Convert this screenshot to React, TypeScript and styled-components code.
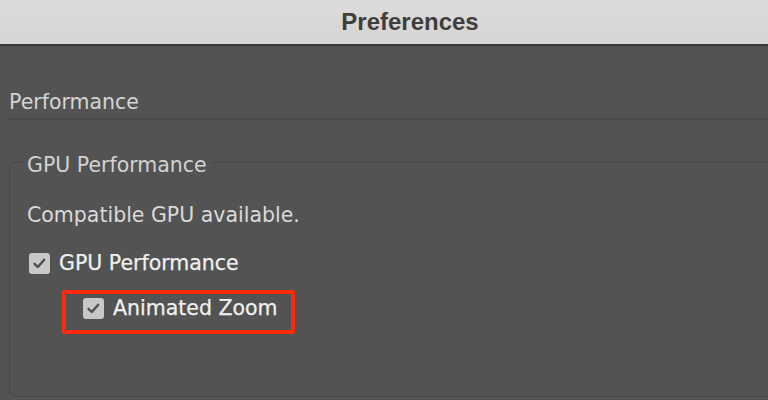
import styled, { createGlobalStyle } from "styled-components"

const GlobalStyle = createGlobalStyle`
  html, body {
    margin: 0;
    padding: 0;
    background: #535353;
  }
  #root {
    width: 768px;
    height: 400px;
    overflow: hidden;
  }
`

const Window = styled.div`
  width: 768px;
  height: 400px;
  display: flex;
  flex-direction: column;
  background: #535353;
  font-family: "DejaVu Sans", "Liberation Sans", sans-serif;
  overflow: hidden;
`

const TitleBar = styled.div`
  height: 44px;
  flex-shrink: 0;
  display: flex;
  align-items: center;
  justify-content: center;
  padding-left: 52px;
  background: linear-gradient(#dcdbd9, #d6d5d3);
  border-bottom: 2px solid #3a3a3a;
`

const Title = styled.h1`
  margin: 0;
  font-family: "Liberation Sans", Arial, sans-serif;
  font-size: 24px;
  font-weight: 700;
  color: #3e3e3e;
`

const Body = styled.div`
  padding: 44px 0 0 9px;
  margin-right: -30px;
`

const SectionHeading = styled.div`
  font-size: 20.5px;
  line-height: 24px;
  color: #d4d4d4;
  padding-bottom: 4px;
  border-bottom: 2px solid #484848;
`

const Group = styled.fieldset`
  margin: 28px 0 0 0;
  padding: 0 0 62px 17px;
  border: 1px solid #474747;
  border-radius: 5px;
  box-shadow: 0 1px 0 #5a5a5a;
`

const GroupTitle = styled.legend`
  padding: 5px 5px 0;
  margin-left: -5px;
  font-size: 20.5px;
  line-height: 24px;
  color: #d2d2d2;
`

const Note = styled.div`
  margin-top: 26px;
  font-size: 20.5px;
  line-height: 24px;
  color: #dadada;
`

const CheckRow = styled.label<{ $indent?: number }>`
  display: flex;
  align-items: center;
  gap: 9px;
  height: 24px;
  margin-left: ${(p) => p.$indent ?? 2}px;
  font-size: 20.5px;
  color: #f0f0f0;
  -webkit-text-stroke: 0.25px #f0f0f0;
`

const FirstRow = styled(CheckRow)`
  margin-top: 24px;
`

const Box = styled.span`
  width: 21px;
  height: 21px;
  flex-shrink: 0;
  border-radius: 3px;
  background: #c8c8c8;
  display: flex;
  align-items: center;
  justify-content: center;
`

const Highlight = styled.div`
  align-self: flex-start;
  display: inline-flex;
  margin: 15px 0 0 35px;
  padding: 2px 13px 10px 17px;
  border: 4px solid #ff2b10;
  border-radius: 2px;
`

const Content = styled.div`
  display: flex;
  flex-direction: column;
`

function Checkbox() {
  return (
    <Box>
      <svg width="21" height="21" viewBox="0 0 21 21">
        <path
          d="M5.5 10.8 L8.8 14 L15.2 6.8"
          fill="none"
          stroke="#4d4d4d"
          strokeWidth="2.4"
          strokeLinecap="round"
          strokeLinejoin="round"
        />
      </svg>
    </Box>
  )
}

export default function App() {
  return (
    <Window>
      <GlobalStyle />
      <TitleBar>
        <Title>Preferences</Title>
      </TitleBar>
      <Body>
        <SectionHeading>Performance</SectionHeading>
        <Group>
          <GroupTitle>GPU Performance</GroupTitle>
          <Content>
            <Note>Compatible GPU available.</Note>
            <FirstRow>
              <Checkbox />
              <span>GPU Performance</span>
            </FirstRow>
            <Highlight>
              <CheckRow $indent={0}>
                <Checkbox />
                <span>Animated Zoom</span>
              </CheckRow>
            </Highlight>
          </Content>
        </Group>
      </Body>
    </Window>
  )
}
